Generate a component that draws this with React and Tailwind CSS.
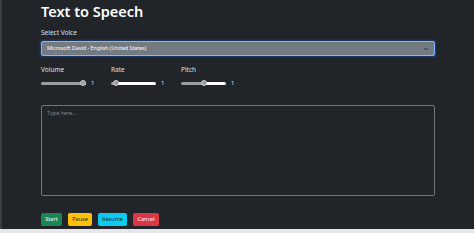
import React from 'react';

const sliders = [
  { label: 'Volume', pct: 100 },
  { label: 'Rate', pct: 10 },
  { label: 'Pitch', pct: 50 },
];

const buttons = [
  { label: 'Start', cls: 'bg-[#198754] text-white w-[21px]' },
  { label: 'Pause', cls: 'bg-[#ffc107] text-[#212529] w-[24px]' },
  { label: 'Resume', cls: 'bg-[#0dcaf0] text-[#212529] w-[29px]' },
  { label: 'Cancel', cls: 'bg-[#dc3545] text-white w-[26px]' },
];

const Slider = ({ label, pct }) => (
  <div className="flex flex-col w-[70px]">
    <span className="text-[6.5px] leading-[9px] text-[#dee2e6]">{label}</span>
    <div className="flex items-center mt-[5px] h-[8px]">
      <div className="relative w-[45px] h-[3px] flex rounded-full">
        <div className="h-full bg-[#9a9da1] rounded-l-full" style={{ width: `${pct}%` }} />
        <div className="h-full flex-1 bg-white rounded-r-full" />
        <div
          className="absolute top-1/2 w-[6px] h-[6px] -mt-[3px] -ml-[3px] rounded-full bg-[#9a9da1] border border-[#c8cacc]"
          style={{ left: `${Math.min(Math.max(pct, 6), 94)}%` }}
        />
      </div>
      <span className="ml-[5px] text-[6px] text-[#dee2e6]">1</span>
    </div>
  </div>
);

export default function App() {
  return (
    <div className="w-[474px] h-[233px] bg-[#e6e7e9] overflow-hidden font-['Noto_Sans','Open_Sans',sans-serif]">
      <div className="h-[229px] bg-[#212529] border-l-2 border-[#3a3e43] pl-[39px] pr-[39px]">
        <h1 className="pt-[1px] text-[14.5px] leading-[20px] font-semibold text-white">Text to Speech</h1>
        <div className="mt-[7px] text-[6.5px] leading-[9px] text-[#dee2e6]">Select Voice</div>
        <div className="mt-[4px] h-[15px] rounded-[2px] bg-[#737a82] border border-[#86b7fe] shadow-[0_0_0_1.5px_rgba(13,110,253,0.25)] flex items-center justify-between pl-[5px] pr-[5px]">
          <span className="text-[5.3px] text-white leading-none">Microsoft David - English (United States)</span>
          <svg width="6" height="4" viewBox="0 0 6 4">
            <path d="M1 1l2 2 2-2" stroke="#3a3f44" strokeWidth="1" fill="none" />
          </svg>
        </div>
        <div className="flex mt-[9px]">
          {sliders.map((s) => (
            <Slider key={s.label} {...s} />
          ))}
        </div>
        <div className="mt-[18px] h-[91px] rounded-[2px] border border-[#70767c] px-[5px] pt-[4px]">
          <div className="text-[5.5px] leading-[7px] text-[#7e848a]">Type here...</div>
        </div>
        <div className="flex gap-[6px] mt-[17px]">
          {buttons.map((b) => (
            <div
              key={b.label}
              className={`h-[13px] rounded-[2px] flex items-center justify-center text-[5.5px] ${b.cls}`}
            >
              {b.label}
            </div>
          ))}
        </div>
      </div>
    </div>
  );
}
